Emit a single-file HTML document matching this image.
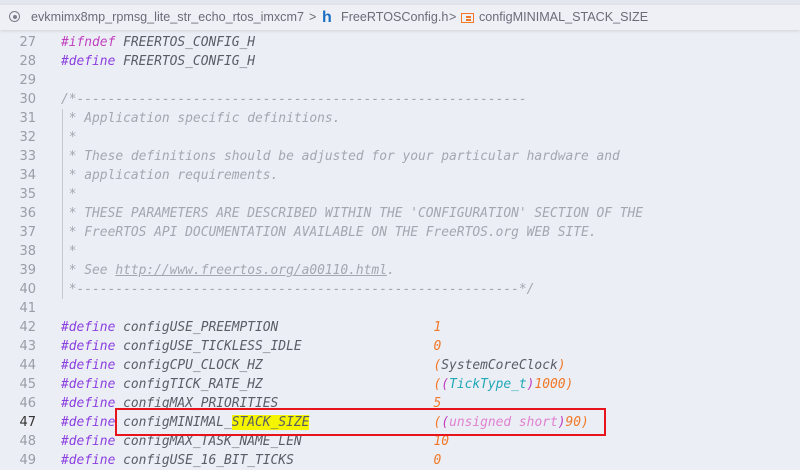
<!DOCTYPE html><html><head><style>
body{margin:0;width:800px;height:457px;overflow:hidden;background:#eceef5;font-family:"Liberation Sans",sans-serif;position:relative}
.tabs{position:absolute;top:0;left:0;width:800px;height:5px;background:#e4e6ee}
.bc{position:absolute;top:5px;left:0;width:800px;height:25px;background:#eef0f6;box-shadow:0 1px 3px rgba(0,0,0,.12);font-size:12.6px;color:#6a6d78;line-height:25px;white-space:nowrap}
.code{position:absolute;top:33px;left:0;font-family:"DejaVu Sans Mono",monospace;font-size:12.9px;font-style:italic;}
.l{height:19px;line-height:19px;white-space:pre;position:relative}
.n{position:absolute;left:0;width:36px;text-align:right;color:#9a9ca6;font-style:normal;font-size:13px;font-family:"DejaVu Sans",sans-serif}
.t{position:absolute;left:61px;color:#5a5c66}
.k{color:#8a3fe0}.p{color:#c040c0}.c{color:#a4a6b0}.o{color:#f07828}.ty{color:#20a8b8}.u{color:#e080d0}
.g{position:absolute;left:62px;width:1px;background:#c8cad2}
</style></head><body>
<div class="tabs"></div>
<div class="bc"><span style="position:absolute;left:9px;top:6px;width:11px;height:11px;border:1.5px solid #7a7d88;border-radius:50%;box-sizing:border-box"></span><span style="position:absolute;left:13px;top:10px;width:4px;height:4px;background:#7a7d88;border-radius:50%;"></span><span style="position:absolute;left:31px">evkmimx8mp_rpmsg_lite_str_echo_rtos_imxcm7</span><span style="position:absolute;left:309px">&gt;</span><span style="position:absolute;left:322px;color:#1a6fc0;font-weight:bold;font-size:16px">h</span><span style="position:absolute;left:341px">FreeRTOSConfig.h</span><span style="position:absolute;left:449px">&gt;</span><span style="position:absolute;left:461px;top:8px;width:13px;height:10px;border:1.5px solid #f07828;box-sizing:border-box"></span><span style="position:absolute;left:466px;top:11px;width:5px;height:1.5px;background:#f07828"></span><span style="position:absolute;left:466px;top:14px;width:5px;height:1.5px;background:#f07828"></span><span style="position:absolute;left:479px">configMINIMAL_STACK_SIZE</span></div>
<div class="g" style="top:109px;height:190px"></div>
<div class="code">
<div class="l"><span class="n">27</span><span class="t"><span class="p">#ifndef</span> FREERTOS_CONFIG_H</span></div>
<div class="l"><span class="n">28</span><span class="t"><span class="k">#define</span> FREERTOS_CONFIG_H</span></div>
<div class="l"><span class="n">29</span></div>
<div class="l"><span class="n">30</span><span class="t c">/*----------------------------------------------------------</span></div>
<div class="l"><span class="n">31</span><span class="t c"> * Application specific definitions.</span></div>
<div class="l"><span class="n">32</span><span class="t c"> *</span></div>
<div class="l"><span class="n">33</span><span class="t c"> * These definitions should be adjusted for your particular hardware and</span></div>
<div class="l"><span class="n">34</span><span class="t c"> * application requirements.</span></div>
<div class="l"><span class="n">35</span><span class="t c"> *</span></div>
<div class="l"><span class="n">36</span><span class="t c"> * THESE PARAMETERS ARE DESCRIBED WITHIN THE 'CONFIGURATION' SECTION OF THE</span></div>
<div class="l"><span class="n">37</span><span class="t c"> * FreeRTOS API DOCUMENTATION AVAILABLE ON THE FreeRTOS.org WEB SITE.</span></div>
<div class="l"><span class="n">38</span><span class="t c"> *</span></div>
<div class="l"><span class="n">39</span><span class="t c"> * See <u>http://www.freertos.org/a00110.html</u>.</span></div>
<div class="l"><span class="n">40</span><span class="t c"> *---------------------------------------------------------*/</span></div>
<div class="l"><span class="n">41</span></div>
<div class="l"><span class="n">42</span><span class="t"><span class="k">#define</span> configUSE_PREEMPTION                    <span class="o">1</span></span></div>
<div class="l"><span class="n">43</span><span class="t"><span class="k">#define</span> configUSE_TICKLESS_IDLE                 <span class="o">0</span></span></div>
<div class="l"><span class="n">44</span><span class="t"><span class="k">#define</span> configCPU_CLOCK_HZ                      <span class="o">(</span>SystemCoreClock<span class="o">)</span></span></div>
<div class="l"><span class="n">45</span><span class="t"><span class="k">#define</span> configTICK_RATE_HZ                      <span class="o">(</span><span class="p">(</span><span class="ty">TickType_t</span><span class="p">)</span><span class="o">1000)</span></span></div>
<div class="l"><span class="n">46</span><span class="t"><span class="k">#define</span> configMAX_PRIORITIES                    <span class="o">5</span></span></div>
<div class="l"><span class="n" style="color:#333">47</span><span class="t"><span class="k">#define</span> configMINIMAL_<span style="background:#f5f500">STACK_SIZE</span>                <span class="o">(</span><span class="p">(</span><span class="u">unsigned short</span><span class="p">)</span><span class="o">90)</span></span></div>
<div class="l"><span class="n">48</span><span class="t"><span class="k">#define</span> configMAX_TASK_NAME_LEN                 <span class="o">10</span></span></div>
<div class="l"><span class="n">49</span><span class="t"><span class="k">#define</span> configUSE_16_BIT_TICKS                  <span class="o">0</span></span></div>
</div>
<div style="position:absolute;left:115px;top:408px;width:491px;height:28px;border:2px solid #e8141c;box-sizing:border-box"></div>
</body></html>
